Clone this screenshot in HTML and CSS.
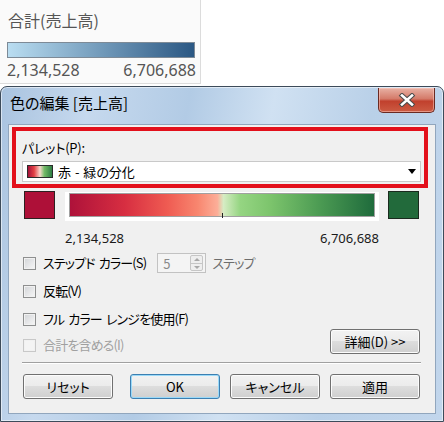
FILE: index.html
```html
<!DOCTYPE html>
<html lang="ja">
<head>
  <meta charset="UTF-8">
  <meta name="viewport" content="width=device-width, initial-scale=1.0">
  <title>色の編集 [売上高]</title>
  <link rel="stylesheet" href="styles.css">
</head>
<body>
  <!-- Color legend -->
  <div class="legend">
    <div class="legend-title">合計(売上高)</div>
    <div class="legend-bar"></div>
    <div class="legend-nums">
      <span>2,134,528</span>
      <span>6,706,688</span>
    </div>
  </div>

  <!-- Edit Colors dialog -->
  <div class="window">
    <div class="titlebar">
      <span class="title">色の編集 [売上高]</span>
      <button class="close-btn" aria-label="閉じる">
        <svg width="18" height="14" viewBox="0 0 18 14">
          <path d="M4 2.5 L14 11.5 M14 2.5 L4 11.5" stroke="#4a4a4a" stroke-width="4.6" stroke-linecap="square"/>
          <path d="M4 2.5 L14 11.5 M14 2.5 L4 11.5" stroke="#ffffff" stroke-width="2.6" stroke-linecap="square"/>
        </svg>
      </button>
    </div>

    <div class="panel">
      <div class="palette-box">
        <div class="label">パレット(P):</div>
        <div class="select">
          <span class="palette-icon"></span>
          <span class="select-text">赤 - 緑の分化</span>
          <span class="arrow"></span>
        </div>
      </div>

      <div class="ramp-row">
        <span class="swatch swatch-start"></span>
        <div class="ramp-frame">
          <div class="ramp"></div>
          <span class="tick"></span>
        </div>
        <span class="swatch swatch-end"></span>
      </div>

      <div class="ramp-nums">
        <span>2,134,528</span>
        <span>6,706,688</span>
      </div>

      <div class="row row-first">
        <span class="checkbox"></span>
        <span class="row-text">ステップド カラー(S)</span>
        <div class="spin">
          <span class="spin-value">5</span>
          <div class="spin-btns">
            <span class="spin-up"></span>
            <span class="spin-down"></span>
          </div>
        </div>
        <span class="row-text dim">ステップ</span>
      </div>

      <div class="row">
        <span class="checkbox"></span>
        <span class="row-text">反転(V)</span>
      </div>

      <div class="row">
        <span class="checkbox"></span>
        <span class="row-text">フル カラー レンジを使用(F)</span>
      </div>

      <div class="row row-last">
        <span class="checkbox disabled"></span>
        <span class="row-text disabled-text">合計を含める(I)</span>
        <button class="btn btn-details">詳細(D) &gt;&gt;</button>
      </div>

      <div class="sep"></div>

      <div class="buttons">
        <button class="btn">リセット</button>
        <button class="btn btn-default">OK</button>
        <button class="btn">キャンセル</button>
        <button class="btn">適用</button>
      </div>
    </div>
  </div>
</body>
</html>
```

FILE: styles.css
```css
/* General */
* {
  box-sizing: border-box;
}

body {
  margin: 0;
  background: #fff;
  font-family: "Noto Sans CJK JP", "Noto Sans", sans-serif;
  font-feature-settings: "palt";
}

/* Legend card */
.legend {
  width: 201px;
  height: 84px;
  background: #fafafa;
  border-right: 1px solid #dcdcdc;
  border-bottom: 1px solid #dcdcdc;
}

.legend-title {
  padding: 9px 0 0 8px;
  font-size: 16px;
  line-height: 22px;
  color: #555;
}

.legend-bar {
  margin: 11px 0 0 7px;
  width: 188px;
  height: 16px;
  border: 1px solid #7d8a96;
  background: linear-gradient(to right, #b9ddf1, #2a5783);
}

.legend-nums {
  display: flex;
  justify-content: space-between;
  width: 189px;
  margin: 2px 0 0 7px;
  font-family: "Noto Sans", sans-serif;
  font-size: 16px;
  line-height: 20px;
  color: #555;
}

/* Window frame */
.window {
  margin-top: 2px;
  width: 444px;
  height: 336px;
  padding: 0 7px 7px 7px;
  border: 1px solid #3d4b5a;
  border-radius: 7px 7px 0 0;
  background: linear-gradient(100deg, #a9c3df 0%, #c6d9ee 18%, #b2cbe5 38%, #d0e1f2 55%, #b9d0e8 75%, #c2d6ec 100%);
  box-shadow: inset 0 0 0 1px rgba(255, 255, 255, 0.55);
}

.titlebar {
  display: flex;
  align-items: flex-start;
  height: 37px;
}

.title {
  margin: 6px 0 0 2px;
  font-size: 15px;
  line-height: 20px;
  color: #000;
}

.close-btn {
  display: flex;
  align-items: center;
  justify-content: center;
  margin: 1px 1px 0 auto;
  width: 57px;
  height: 25px;
  padding: 0;
  border: 1px solid #6a2a22;
  border-top: none;
  border-radius: 0 0 5px 5px;
  background: linear-gradient(to bottom, #e8b1a4 0%, #d47a69 45%, #c1402d 55%, #cc5b43 100%);
  box-shadow: inset 0 0 0 1px rgba(255, 210, 200, 0.5);
}

/* Client area */
.panel {
  height: 290px;
  border: 1px solid #91a6bd;
  background: #f0f0f0;
}

.palette-box {
  margin: 2px 0 0 3px;
  width: 416px;
  height: 61px;
  border: 4px solid #e3101b;
  padding: 0 3px 0 6px;
}

.label {
  margin-top: 8px;
  font-size: 13px;
  line-height: 18px;
  letter-spacing: -0.2px;
  color: #000;
}

.select {
  display: flex;
  align-items: center;
  margin-top: 4px;
  height: 21px;
  padding-left: 4px;
  background: #fff;
  border: 1px solid #c9c9c9;
}

.palette-icon {
  width: 26px;
  height: 13px;
  border: 1px solid #2b2b2b;
  background: linear-gradient(to right, #a3123a 0%, #e33f43 25%, #f8d6cc 50%, #73ba67 68%, #2e7d43 100%);
}

.select-text {
  margin-left: 5px;
  font-size: 13px;
  line-height: 18px;
  word-spacing: 1px;
  color: #000;
}

.arrow {
  margin: 0 4px 0 auto;
  width: 0;
  height: 0;
  border-left: 4.5px solid transparent;
  border-right: 4.5px solid transparent;
  border-top: 5px solid #000;
}

/* Color ramp */
.ramp-row {
  display: flex;
  align-items: flex-start;
  margin-top: 3px;
  height: 30px;
}

.swatch {
  width: 31px;
  height: 28px;
  border: 1px solid #2d2020;
}

.swatch-start {
  margin-left: 15px;
  background: #ae1038;
}

.swatch-end {
  margin-left: 9px;
  background: #226a3b;
  border-color: #1a2a1e;
}

.ramp-frame {
  position: relative;
  margin: 1px 0 0 10px;
  width: 314px;
  height: 29px;
  padding: 1px 4px 0 4px;
  background: #fff;
}

.ramp {
  height: 24px;
  border: 1px solid #a0a0a0;
  background: linear-gradient(to right, #ae123a 0%, #d72e41 18%, #ef5b52 32%, #f8866f 42%, #fcae98 48.5%, #d6ecc4 50.5%, #95d582 56%, #7cc46c 66%, #4c9b53 82%, #1f6b3c 100%);
}

.tick {
  position: absolute;
  left: 157px;
  top: 21px;
  width: 1px;
  height: 5px;
  background: #222;
}

.ramp-nums {
  display: flex;
  justify-content: space-between;
  margin: 9px 0 0 56px;
  width: 314px;
  font-family: "Noto Sans", sans-serif;
  font-size: 13px;
  line-height: 16px;
  color: #1a1a1a;
}

/* Option rows */
.row {
  display: flex;
  align-items: center;
  height: 28px;
  margin-left: 14px;
  font-size: 13px;
}

.row-first {
  margin-top: 3px;
}

.row-last {
  height: 24px;
}

.checkbox {
  width: 13px;
  height: 13px;
  border: 1px solid #8e8f8f;
  background: linear-gradient(135deg, #d2d4d7, #f7f7f7);
  box-shadow: inset 0 0 0 1px #f1f1f1;
}

.checkbox.disabled {
  border-color: #c8c8c8;
  background: #f4f4f4;
}

.row-text {
  margin-left: 7px;
  line-height: 18px;
  letter-spacing: -0.85px;
  word-spacing: 2px;
  color: #000;
}

.dim {
  margin-left: 6px;
  color: #6d6d6d;
}

.disabled-text {
  color: #a0a0a0;
}

.spin {
  display: flex;
  align-items: center;
  margin-left: 11px;
  width: 49px;
  height: 20px;
  border: 1px solid #c2c2c2;
  background: #f4f4f4;
}

.spin-value {
  margin-left: 5px;
  color: #8a8a8a;
}

.spin-btns {
  display: flex;
  flex-direction: column;
  margin: 0 2px 0 auto;
  width: 13px;
  height: 16px;
  border: 1px solid #c6c6c6;
  border-radius: 2px;
  background: #eeeeee;
}

.spin-up,
.spin-down {
  flex: 1;
  position: relative;
}

.spin-up {
  border-bottom: 1px solid #c6c6c6;
}

.spin-up::after,
.spin-down::after {
  content: "";
  position: absolute;
  left: 3px;
  top: 2px;
  border-left: 3px solid transparent;
  border-right: 3px solid transparent;
}

.spin-up::after {
  border-bottom: 3px solid #a8a8a8;
}

.spin-down::after {
  border-top: 3px solid #a8a8a8;
}

/* Buttons */
.btn {
  width: 90px;
  height: 25px;
  padding: 0;
  border: 1px solid #707070;
  border-radius: 3px;
  background: linear-gradient(to bottom, #f2f2f2 0%, #ebebeb 50%, #dddddd 50%, #cfcfcf 100%);
  box-shadow: inset 0 0 0 1px #fcfcfc;
  font-family: "Noto Sans CJK JP", "Noto Sans", sans-serif;
  font-feature-settings: "palt";
  font-size: 13px;
  color: #000;
}

.btn-default {
  border-color: #3c7fb1;
  box-shadow: inset 0 0 0 1px #9ad9f8;
}

.btn-details {
  align-self: flex-start;
  margin: -4px 15px 0 auto;
}

.sep {
  margin: 5px 0 0 13px;
  width: 399px;
  border-top: 1px solid #a0a0a0;
  border-bottom: 1px solid #fff;
}

.buttons {
  display: flex;
  margin: 10px 0 0 14px;
}

.buttons .btn + .btn {
  margin-left: 10px;
}

.buttons .btn-default {
  margin-left: 17px !important;
}
```
